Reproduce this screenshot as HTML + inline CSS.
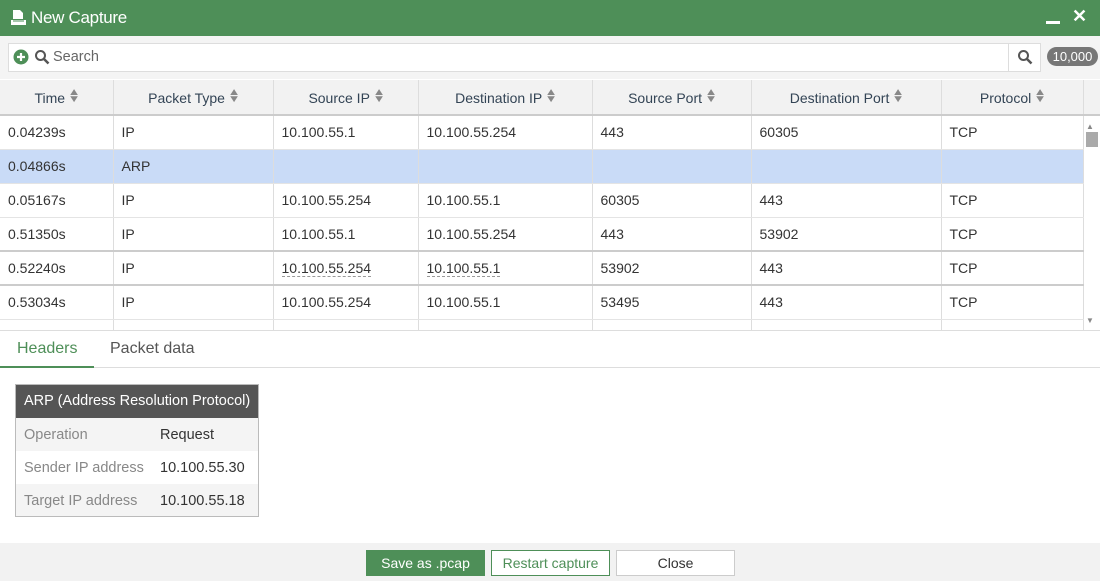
<!DOCTYPE html><html><head><style>
*{box-sizing:border-box;margin:0;padding:0}
body{width:1100px;height:581px;overflow:hidden;font-family:"Liberation Sans",sans-serif;font-size:14px;color:#333;background:#fff;position:relative}
.abs{position:absolute}
.title{left:0;top:0;width:1100px;height:36px;background:#4e8f58;color:#fff;font-size:17px;line-height:36px;padding-left:31px;letter-spacing:-0.3px}
.srch{left:8px;top:43px;width:1033px;height:29px;border:1px solid #ddd;background:#fff}
.tw{position:absolute;left:0;top:80px;width:1100px;height:250px;overflow:hidden}
table.g{border-collapse:collapse;table-layout:fixed}
.g td,.g th{height:34px;border-right:1px solid #ddd;border-bottom:1px solid #e4e4e4;padding-left:8px;text-align:left;font-weight:normal;white-space:nowrap;overflow:hidden}
.g th{background:#f2f2f2;text-align:center;padding:0;color:#345;border-bottom:2px solid #ccc;height:35px}
.sel td{background:#c9dbf7}
.arr{display:inline-block;font-size:10px;color:#888;vertical-align:1px;line-height:7px;width:9px;transform:scaleX(1.3)}
.dot{border-bottom:1px dashed #999}
.kv{border-collapse:collapse;width:242px}
.kv td{height:33px;border:none;padding-left:8px;font-size:14.5px}
.btn{top:550px;height:26px;font-size:14px;line-height:24px;text-align:center;border:1px solid #ccc}
</style></head><body>
<div class="abs title">New Capture</div>
<svg class="abs" style="left:10px;top:9px" width="17" height="17" viewBox="0 0 17 17"><path d="M3 1h7l3 3v6H3z" fill="#fff"/><path d="M1 11h15v5H1z" fill="#fff"/><path d="M3 12h11" stroke="#4e8f58"/></svg>
<div class="abs" style="left:1046px;top:21px;width:14px;height:3px;background:#fff"></div>
<div class="abs" style="left:1072px;top:6px;color:#fff;font-size:18px;font-weight:bold">✕</div>
<div class="abs" style="left:0;top:36px;width:1100px;height:43px;background:#f4f4f4"></div>
<div class="abs srch"></div>
<div class="abs" style="left:1008px;top:43px;width:33px;height:29px;border:1px solid #ddd;background:#fff"></div>
<svg class="abs" style="left:13px;top:49px" width="16" height="16"><circle cx="8" cy="8" r="7.5" fill="#4e8f58"/><path d="M8 4v8M4 8h8" stroke="#fff" stroke-width="2.2"/></svg>
<svg class="abs" style="left:34px;top:49px" width="16" height="16"><circle cx="6.5" cy="6.5" r="4.5" fill="none" stroke="#555" stroke-width="2"/><path d="M10 10l4.5 4.5" stroke="#555" stroke-width="2.5"/></svg>
<svg class="abs" style="left:1017px;top:49px" width="16" height="16"><circle cx="6.5" cy="6.5" r="4.5" fill="none" stroke="#555" stroke-width="2"/><path d="M10 10l4.5 4.5" stroke="#555" stroke-width="2.5"/></svg>
<div class="abs" style="left:53px;top:49px;color:#666;font-size:14.5px">Search</div>
<div class="abs" style="left:1047px;top:47px;width:51px;height:19px;border-radius:10px;background:#777;color:#fff;font-size:13px;line-height:19px;text-align:center">10,000</div>
<div class="tw">
<table class="g">
<colgroup><col width="113"><col width="160"><col width="145"><col width="174"><col width="159"><col width="190"><col width="142"><col width="17"></colgroup>
<tr><th>Time <span class="arr">▲<br>▼</span></th><th>Packet Type <span class="arr">▲<br>▼</span></th><th>Source IP <span class="arr">▲<br>▼</span></th><th>Destination IP <span class="arr">▲<br>▼</span></th><th>Source Port <span class="arr">▲<br>▼</span></th><th>Destination Port <span class="arr">▲<br>▼</span></th><th>Protocol <span class="arr">▲<br>▼</span></th><th style="border-right:none;background:#f2f2f2"></th></tr>
<tr><td>0.04239s</td><td>IP</td><td>10.100.55.1</td><td>10.100.55.254</td><td>443</td><td>60305</td><td>TCP</td><td rowspan="7" style="border:none;background:#fff"></td></tr>
<tr class="sel"><td>0.04866s</td><td>ARP</td><td></td><td></td><td></td><td></td><td></td></tr>
<tr><td>0.05167s</td><td>IP</td><td>10.100.55.254</td><td>10.100.55.1</td><td>60305</td><td>443</td><td>TCP</td></tr>
<tr><td style="border-bottom:2px solid #ccc">0.51350s</td><td style="border-bottom:2px solid #ccc">IP</td><td style="border-bottom:2px solid #ccc">10.100.55.1</td><td style="border-bottom:2px solid #ccc">10.100.55.254</td><td style="border-bottom:2px solid #ccc">443</td><td style="border-bottom:2px solid #ccc">53902</td><td style="border-bottom:2px solid #ccc">TCP</td></tr>
<tr><td style="border-bottom:2px solid #ccc">0.52240s</td><td style="border-bottom:2px solid #ccc">IP</td><td style="border-bottom:2px solid #ccc"><span class="dot">10.100.55.254</span></td><td style="border-bottom:2px solid #ccc"><span class="dot">10.100.55.1</span></td><td style="border-bottom:2px solid #ccc">53902</td><td style="border-bottom:2px solid #ccc">443</td><td style="border-bottom:2px solid #ccc">TCP</td></tr>
<tr><td>0.53034s</td><td>IP</td><td>10.100.55.254</td><td>10.100.55.1</td><td>53495</td><td>443</td><td>TCP</td></tr>
<tr><td></td><td></td><td></td><td></td><td></td><td></td><td></td></tr>
</table>
</div>
<div class="abs" style="left:1086px;top:122px;font-size:8px;color:#888">▲</div>
<div class="abs" style="left:1086px;top:132px;width:12px;height:15px;background:#aaa"></div>
<div class="abs" style="left:1086px;top:316px;font-size:8px;color:#888">▼</div>
<div class="abs" style="left:0;top:330px;width:1100px;height:1px;background:#ddd"></div>
<div class="abs" style="left:0;top:367px;width:1100px;height:1px;background:#ddd"></div>
<div class="abs" style="left:0;top:366px;width:94px;height:2px;background:#4e8f58"></div>
<div class="abs" style="left:17px;top:340px;font-size:16px;color:#4e8f58">Headers</div>
<div class="abs" style="left:110px;top:340px;font-size:16px;color:#555">Packet data</div>
<div class="abs" style="left:15px;top:384px;width:244px;height:133px;border:1px solid #bbb;background:#fff;overflow:hidden">
<div style="height:33px;background:#555;color:#fff;font-size:14.5px;line-height:33px;padding-left:8px">ARP (Address Resolution Protocol)</div>
<table class="kv"><tr style="background:#f4f4f4"><td style="color:#888;width:136px">Operation</td><td>Request</td></tr><tr><td style="color:#888">Sender IP address</td><td>10.100.55.30</td></tr><tr style="background:#f4f4f4"><td style="color:#888">Target IP address</td><td>10.100.55.18</td></tr></table>
</div>
<div class="abs" style="left:0;top:543px;width:1100px;height:38px;background:#f2f2f2"></div>
<div class="abs btn" style="left:366px;width:119px;background:#4e8f58;color:#fff;border-color:#4e8f58">Save as .pcap</div>
<div class="abs btn" style="left:491px;width:119px;background:#fff;color:#4e8f58;border-color:#4e8f58">Restart capture</div>
<div class="abs btn" style="left:616px;width:119px;background:#fff">Close</div>
</body></html>
